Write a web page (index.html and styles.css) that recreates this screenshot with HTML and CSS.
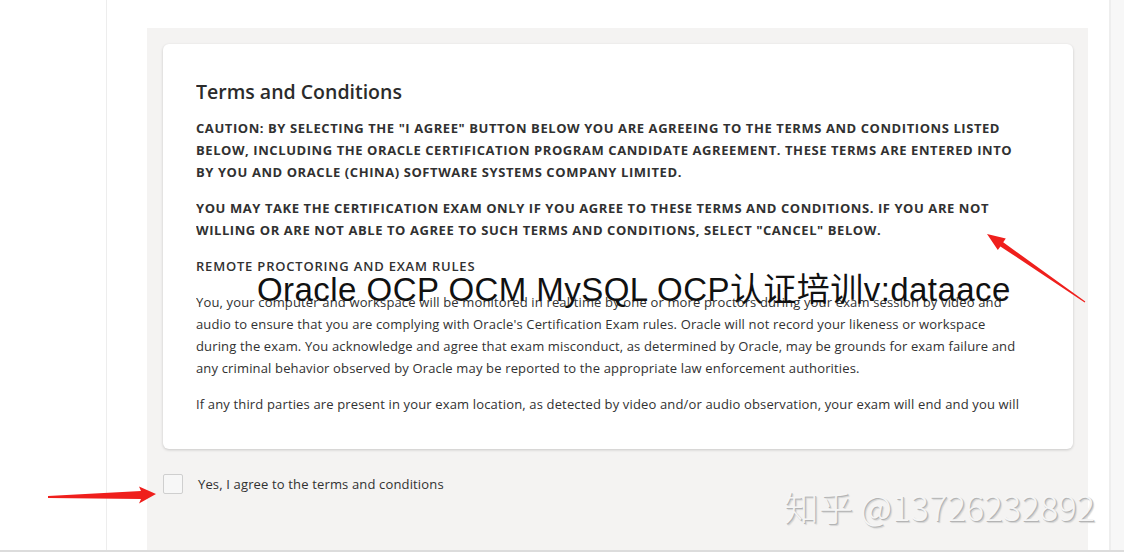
FILE: index.html
```html
<!DOCTYPE html>
<html lang="en">
<head>
    <meta charset="UTF-8">
    <meta name="viewport" content="width=device-width, initial-scale=1.0">
    <title>Terms and Conditions</title>
    <link rel="stylesheet" href="styles.css">
</head>
<body>
    <div class="page">
        <div class="gutter"></div>
        <div class="main">
            <div class="panel">
                <div class="card">
                    <div class="terms">
                        <h2>Terms and Conditions</h2>
                        <p class="caps">CAUTION: BY SELECTING THE "I AGREE" BUTTON BELOW YOU ARE AGREEING TO THE TERMS AND CONDITIONS LISTED BELOW, INCLUDING THE ORACLE CERTIFICATION PROGRAM CANDIDATE AGREEMENT. THESE TERMS ARE ENTERED INTO BY YOU AND ORACLE (CHINA) SOFTWARE SYSTEMS COMPANY LIMITED.</p>
                        <p class="caps">YOU MAY TAKE THE CERTIFICATION EXAM ONLY IF YOU AGREE TO THESE TERMS AND CONDITIONS. IF YOU ARE NOT WILLING OR ARE NOT ABLE TO AGREE TO SUCH TERMS AND CONDITIONS, SELECT "CANCEL" BELOW.</p>
                        <p class="sub">REMOTE PROCTORING AND EXAM RULES</p>
                        <p>You, your computer and workspace will be monitored in real time by one or more proctors during your exam session by video and audio to ensure that you are complying with Oracle's Certification Exam rules. Oracle will not record your likeness or workspace during the exam. You acknowledge and agree that exam misconduct, as determined by Oracle, may be grounds for exam failure and any criminal behavior observed by Oracle may be reported to the appropriate law enforcement authorities.</p>
                        <p>If any third parties are present in your exam location, as detected by video and/or audio observation, your exam will end and you will be subject to the consequences described in the exam rules.</p>
                    </div>
                </div>
                <label class="agree">
                    <input type="checkbox" id="agree">
                    <span class="box"></span>
                    Yes, I agree to the terms and conditions
                </label>
            </div>
        </div>
        <div class="side"></div>
    </div>

    <div class="mark">Oracle OCP OCM MySQL OCP认证培训v:dataace</div>
    <div class="zhihu">知乎 @13726232892</div>

    <svg class="arrows" width="1124" height="552" viewBox="0 0 1124 552">
        <polygon fill="#ef1f1c" points="987,234 1005.8,238.5 1003.2,242.2 1085.3,301.6 1084.7,302.4 1000.4,246.4 997.8,250.1"/>
        <polygon fill="#ef1f1c" points="48,496 141,491 139,486.5 156,494 139,503.5 141,499 48,498"/>
    </svg>
</body>
</html>
```

FILE: styles.css
```css
body {
    margin: 0;
    background-color: #fff;
    font-family: 'Open Sans', 'Noto Sans', sans-serif;
    color: #313131;
}

.page {
    display: flex;
    height: 552px;
    overflow: hidden;
    border-bottom: 2px solid #dcdcdc;
    box-sizing: border-box;
}

.gutter {
    width: 106px;
    flex-shrink: 0;
}

.main {
    width: 1005px;
    flex-shrink: 0;
    border-left: 1px solid #ededed;
    border-right: 2px solid #eeeeee;
    padding: 28px 21px 0 40px;
    box-sizing: border-box;
}

.side {
    flex-grow: 1;
    background-color: #f7f7f7;
}

.panel {
    background-color: #f4f3f2;
    padding: 16px 15px 0 16px;
    height: 100%;
    box-sizing: border-box;
}

.card {
    background-color: #fff;
    border-radius: 6px;
    box-shadow: 0 1px 3px rgba(0, 0, 0, 0.18);
    height: 405px;
    padding: 35px 44px 34px 33px;
    box-sizing: border-box;
}

.terms {
    height: 100%;
    overflow: hidden;
}

.terms h2 {
    margin: 0 0 12px 0;
    font-size: 19.5px;
    font-weight: 600;
    line-height: 26px;
    color: #2b2b2b;
}

.terms p {
    margin: 0 0 14px 0;
    font-size: 13px;
    line-height: 22px;
    letter-spacing: 0.15px;
}

.terms p.caps {
    font-weight: 700;
    letter-spacing: 0.57px;
}

.terms p.sub {
    font-weight: 600;
    letter-spacing: 0.8px;
}

.agree {
    display: flex;
    align-items: center;
    gap: 15px;
    margin-top: 25px;
    font-size: 13px;
    letter-spacing: 0.15px;
    color: #313131;
}

.agree input {
    display: none;
}

.agree .box {
    width: 20px;
    height: 20px;
    box-sizing: border-box;
    border: 1px solid #cfcfcf;
    border-radius: 2px;
    background-color: #f7f7f7;
}

/* watermarks over the screenshot */
.mark {
    position: absolute;
    left: 257px;
    top: 273px;
    font-family: 'Liberation Sans', 'Noto Sans CJK SC', sans-serif;
    font-size: 33px;
    line-height: 33px;
    letter-spacing: 0.45px;
    color: #111;
    white-space: nowrap;
}

.zhihu {
    position: absolute;
    left: 784px;
    top: 481px;
    font-family: 'Noto Sans CJK SC', sans-serif;
    font-weight: 300;
    font-size: 34.5px;
    color: #f5f5f5;
    text-shadow: 1px 1px 0 #b4b4b4, 2px 2px 1px #d4d4d4;
    white-space: nowrap;
}

.arrows {
    position: absolute;
    left: 0;
    top: 0;
    pointer-events: none;
}
```
